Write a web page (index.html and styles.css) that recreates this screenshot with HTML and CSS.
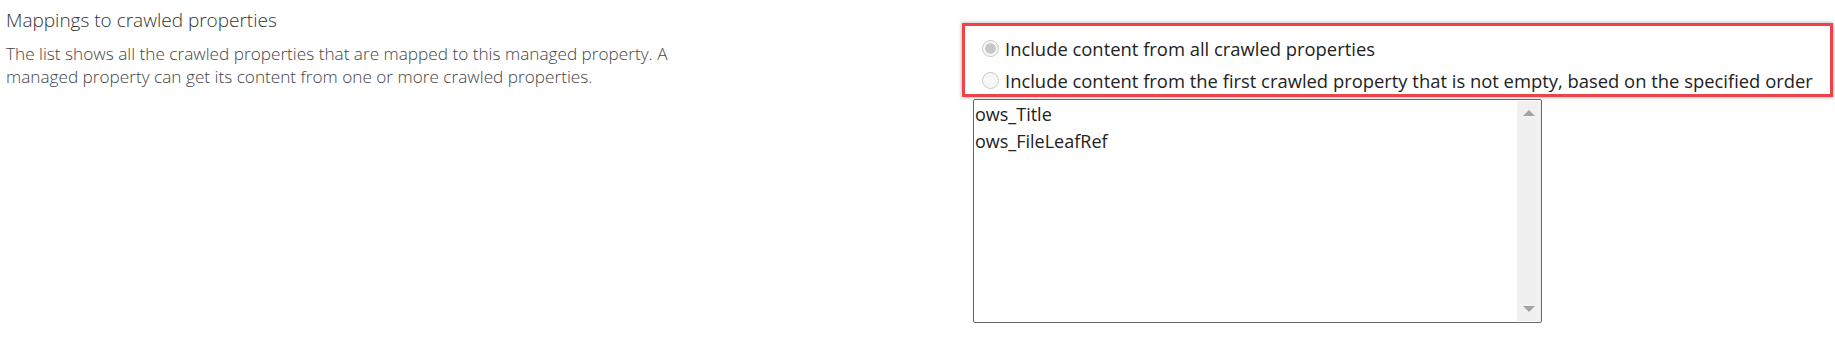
FILE: index.html
```html
<!DOCTYPE html>
<html lang="en">
<head>
    <meta charset="UTF-8">
    <title>Mappings to crawled properties</title>
    <link rel="stylesheet" href="styles.css">
</head>
<body>
    <div class="section">
        <div class="section-info">
            <h3 class="section-title">Mappings to crawled properties</h3>
            <p class="section-desc">The list shows all the crawled properties that are mapped to this managed property. A managed property can get its content from one or more crawled properties.</p>
        </div>
        <div class="section-body">
            <div class="choice-box">
                <label class="choice">
                    <input type="radio" name="mapping" checked disabled>
                    <span>Include content from all crawled properties</span>
                </label>
                <label class="choice">
                    <input type="radio" name="mapping" disabled>
                    <span>Include content from the first crawled property that is not empty, based on the specified order</span>
                </label>
            </div>
            <div class="listbox">
                <div class="listbox-items">
                    <div class="listbox-item">ows_Title</div>
                    <div class="listbox-item">ows_FileLeafRef</div>
                </div>
                <div class="listbox-scroll">
                    <span class="arrow-up"></span>
                    <span class="arrow-down"></span>
                </div>
            </div>
        </div>
    </div>
</body>
</html>
```

FILE: styles.css
```css
body {
    margin: 0;
    background: #fff;
    font-family: "Open Sans", "Segoe UI", sans-serif;
    color: #444;
}
.section {
    display: flex;
}
.section-info {
    width: 962px;
    flex: none;
    padding-left: 6px;
    box-sizing: border-box;
}
.section-title {
    margin: 7px 0 0;
    font-size: 19px;
    font-weight: 300;
    line-height: 26px;
    color: #333;
}
.section-desc {
    margin: 9px 0 0;
    width: 690px;
    font-size: 17.2px;
    font-weight: 300;
    line-height: 23px;
    color: #444;
}
.section-body {
    padding-top: 23px;
}
.choice-box {
    width: 871px;
    height: 74px;
    box-sizing: border-box;
    border: 3px solid #ef4249;
    box-shadow: 0 0 4px rgba(0, 0, 0, 0.35);
    padding: 6px 0 0 17px;
}
.choice {
    display: flex;
    align-items: center;
    height: 32px;
    font-size: 18.4px;
    color: #222;
}
.choice input {
    appearance: none;
    width: 17px;
    height: 17px;
    margin: 0 6px 0 0;
    border: 1px solid #c8c8c8;
    border-radius: 50%;
    background: #f7f7f7;
    box-sizing: border-box;
}
.choice input:checked {
    background: radial-gradient(circle, #c8c8c8 0 5px, #f7f7f7 5.5px);
}
.listbox {
    display: flex;
    width: 569px;
    height: 224px;
    margin: 2px 0 0 11px;
    box-sizing: border-box;
    border: 1px solid #666;
    border-radius: 2px;
}
.listbox-items {
    flex: 1;
    padding: 1px 0 0 1px;
}
.listbox-item {
    font-size: 18px;
    line-height: 27px;
    color: #222;
}
.listbox-scroll {
    width: 24px;
    background: #f0f0f0;
    margin: 1px 0 1px;
    display: flex;
    flex-direction: column;
    justify-content: space-between;
    align-items: center;
    padding: 9px 0;
}
.arrow-up, .arrow-down {
    width: 0;
    height: 0;
    border-left: 6px solid transparent;
    border-right: 6px solid transparent;
}
.arrow-up {
    border-bottom: 6px solid #a3a3a3;
}
.arrow-down {
    border-top: 6px solid #a3a3a3;
}
```
